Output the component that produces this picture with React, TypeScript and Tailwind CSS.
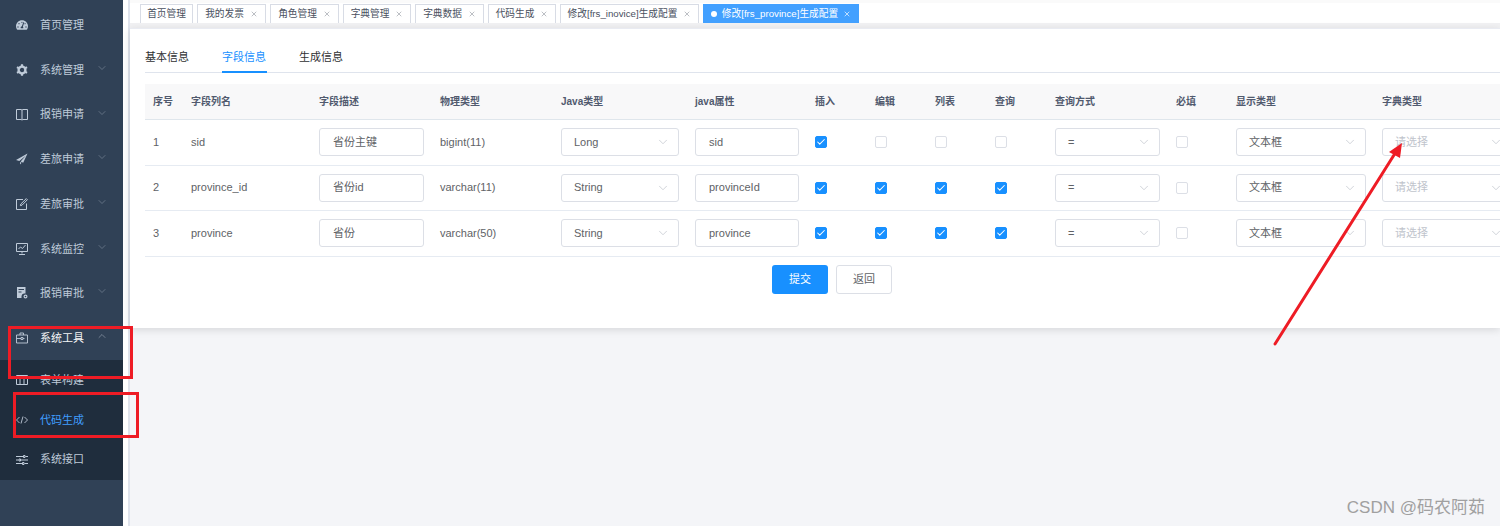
import type { ReactNode } from "react";
import { ChevronDown, ChevronUp, Check, X } from "lucide-react";
import { FaTachometerAlt } from "react-icons/fa";

const font = "font-['Liberation_Sans','Noto_Sans_CJK_SC',sans-serif]";

const GearIcon = () => (
  <svg viewBox="0 0 12 12" className="h-3 w-3" fill="none" stroke="currentColor">
    <circle cx="6" cy="6" r="3.4" strokeWidth="2.4" />
    <path d="M6 .2v2M6 9.8v2M1 3.1l1.7 1M9.3 7.9l1.7 1M1 8.9l1.7-1M9.3 4.1l1.7-1" strokeWidth="2.2" />
  </svg>
);

const BookIcon = () => (
  <svg viewBox="0 0 12 12" className="h-3 w-3" fill="none" stroke="currentColor" strokeWidth="1">
    <path d="M.5 .5h4.5l1 .5 1-.5h4.5v10H7l-1 .5-1-.5H.5zM6 1v9.5" />
  </svg>
);

const PlaneIcon = () => (
  <svg viewBox="0 0 12 12" className="h-3 w-3" fill="currentColor">
    <path d="M11.5.5 0 7l3.3 1L10 2.5 4.6 8.6l2.6 1.1zM4 9v2.5l1.6-1.7z" />
  </svg>
);

const EditIcon = () => (
  <svg viewBox="0 0 12 12" className="h-3 w-3" fill="none" stroke="currentColor" strokeWidth="1">
    <path d="M7 1.5H.5v10h10V5.5" />
    <path d="M10.3.6 11.4 1.7 6 7.2l-1.6.4.4-1.6z" />
  </svg>
);

const MonitorIcon = () => (
  <svg viewBox="0 0 12 12" className="h-3 w-3" fill="none" stroke="currentColor" strokeWidth="1">
    <path d="M.5.5h11v8H.5zM6 8.5v2M3 11.5h6M2.5 6l2-2 2 1.5 3-3.5" />
  </svg>
);

const ReportIcon = () => (
  <svg viewBox="0 0 12 12" className="h-3 w-3" fill="currentColor">
    <path d="M1 0h8.5v6.5H8a3 3 0 0 0-2.5 2.5v2H1zM2.5 2v1h5.5V2zm0 2.5v1h3v-1zM9.5 7.5a2 2 0 1 1 0 4 2 2 0 0 1 0-4zm0 1.2a.8.8 0 1 0 0 1.6.8.8 0 0 0 0-1.6z" />
  </svg>
);

const ToolIcon = () => (
  <svg viewBox="0 0 12 12" className="h-3 w-3" fill="none" stroke="currentColor" strokeWidth="0.9">
    <path d="M.5 3h11v8H.5zM4 3V1h3.5v2M.5 6.5H5M7 6.5h1.5M5 5.5h2v2H5z" />
  </svg>
);

const GridIcon = () => (
  <svg viewBox="0 0 12 12" className="h-3 w-3" fill="none" stroke="currentColor" strokeWidth="1">
    <path d="M.5 1.5h11v9H.5zM.5 4.5h11M4 4.5v6M8 4.5v6" />
  </svg>
);

const CodeIcon = () => (
  <svg viewBox="0 0 12 12" className="h-3 w-3" fill="none" stroke="currentColor" strokeWidth="0.9">
    <path d="M3.5 3 .5 6l3 3M8.5 3l3 3-3 3M7 2.5 5 9.5" />
  </svg>
);

const SlidersIcon = () => (
  <svg viewBox="0 0 12 12" className="h-3 w-3" fill="none" stroke="currentColor" strokeWidth="1">
    <path d="M0 2.5h7M9.5 2.5H12M0 6h2.5M5 6h7M0 9.5h6M8.5 9.5H12" />
    <path d="M7.5 1.5h1.5v2H7.5zM3 5h1.5v2H3zM6.5 8.5H8v2H6.5z" />
  </svg>
);

const menus: { icon: ReactNode; label: string; arrow?: "down" | "up"; active?: boolean }[] = [
  { icon: <FaTachometerAlt className="h-3 w-3" />, label: "首页管理" },
  { icon: <GearIcon />, label: "系统管理", arrow: "down" },
  { icon: <BookIcon />, label: "报销申请", arrow: "down" },
  { icon: <PlaneIcon />, label: "差旅申请", arrow: "down" },
  { icon: <EditIcon />, label: "差旅审批", arrow: "down" },
  { icon: <MonitorIcon />, label: "系统监控", arrow: "down" },
  { icon: <ReportIcon />, label: "报销审批", arrow: "down" },
  { icon: <ToolIcon />, label: "系统工具", arrow: "up", active: true },
];

const subMenus = [
  { icon: <GridIcon />, label: "表单构建" },
  { icon: <CodeIcon />, label: "代码生成", active: true },
  { icon: <SlidersIcon />, label: "系统接口" },
];

const tags = [
  { label: "首页管理", w: "w-[53px]" },
  { label: "我的发票", w: "w-[69px]", close: true },
  { label: "角色管理", w: "w-[69px]", close: true },
  { label: "字典管理", w: "w-[68px]", close: true },
  { label: "字典数据", w: "w-[69px]", close: true },
  { label: "代码生成", w: "w-[68px]", close: true },
  { label: "修改[frs_inovice]生成配置", w: "w-[139px]", close: true },
];

const rows = [
  { no: 1, h: "h-[46px]", name: "sid", desc: "省份主键", type: "bigint(11)", java: "Long", attr: "sid", checks: [true, false, false, false] },
  { no: 2, h: "h-[45px]", name: "province_id", desc: "省份id", type: "varchar(11)", java: "String", attr: "provinceId", checks: [true, true, true, true] },
  { no: 3, h: "h-[46px]", name: "province", desc: "省份", type: "varchar(50)", java: "String", attr: "province", checks: [true, true, true, true] },
];

const heads = [
  ["序号", "w-[38px]"],
  ["字段列名", "w-[128px]"],
  ["字段描述", "w-[121px]"],
  ["物理类型", "w-[121px]"],
  ["Java类型", "w-[134px]"],
  ["java属性", "w-[120px]"],
  ["插入", "w-[60px]"],
  ["编辑", "w-[60px]"],
  ["列表", "w-[60px]"],
  ["查询", "w-[60px]"],
  ["查询方式", "w-[121px]"],
  ["必填", "w-[60px]"],
  ["显示类型", "w-[146px]"],
  ["字典类型", "w-[146px]"],
];

const Box = ({ on }: { on: boolean }) => (
  <span
    className={`flex h-3 w-3 items-center justify-center rounded-[2px] border ${
      on ? "border-[#1890ff] bg-[#1890ff]" : "border-[#dcdfe6] bg-white"
    }`}
  >
    {on && <Check className="h-2.5 w-2.5 text-white" strokeWidth={2.5} />}
  </span>
);

const Field = ({ value, w }: { value: string; w: string }) => (
  <div className={`flex h-7 ${w} items-center rounded-[3px] border border-[#dcdfe6] bg-white pl-[13px] text-[11px] text-[#606266]`}>
    {value}
  </div>
);

const Picker = ({ value, w, empty }: { value: string; w: string; empty?: boolean }) => (
  <div className={`flex h-7 ${w} items-center justify-between rounded-[3px] border border-[#dcdfe6] bg-white pl-[12px] pr-[8px] text-[11px] ${empty ? "text-[#c0c4cc]" : "text-[#606266]"}`}>
    <span>{value}</span>
    <ChevronDown className="h-3.5 w-3.5 text-[#c0c4cc]" strokeWidth={1.25} />
  </div>
);

export default function App() {
  return (
    <div className={`relative flex h-[526px] w-[1500px] overflow-hidden bg-[#f4f5f8] ${font}`}>
      <aside className="h-full w-[123px] shrink-0 bg-[#304156] pt-[3px]">
        {menus.map((m) => (
          <div key={m.label} className="flex h-[44.7px] items-center pl-[16px]">
            <span className="w-6 text-[#bfcbd9]">{m.icon}</span>
            <span className={`w-[56px] text-[11px] ${m.active ? "text-[#f4f4f5]" : "text-[#bfcbd9]"}`}>{m.label}</span>
            {m.arrow === "down" && <ChevronDown className="-mt-1 h-3 w-3 text-[#7f8c9c]" strokeWidth={1.25} />}
            {m.arrow === "up" && <ChevronUp className="-mt-1 h-3 w-3 text-[#9aa5b3]" strokeWidth={1.25} />}
          </div>
        ))}
        <div className="-mt-px bg-[#1f2d3d] pt-px">
          {subMenus.map((m) => (
            <div key={m.label} className="flex h-[39.7px] items-center pl-[16px]">
              <span className="w-6 text-[#bfcbd9]">{m.icon}</span>
              <span className={`text-[11px] ${m.active ? "text-[#409eff]" : "text-[#bfcbd9]"}`}>{m.label}</span>
            </div>
          ))}
        </div>
      </aside>

      <div className="w-[5px] shrink-0 bg-white" />
      <div className="w-[2px] shrink-0 bg-[#dfe3ec]" />

      <main className="min-w-0 flex-1">
        <div className="flex h-[23px] gap-[4px] border-t-[3px] border-[#fafafa] bg-white pl-[10px] pt-[1px]">
          {tags.map((t) => (
            <div
              key={t.label}
              className={`flex h-[19px] ${t.w} items-center justify-center gap-[6px] border border-b-0 border-[#d8dce5] bg-white text-[9.7px] text-[#495060]`}
            >
              <span>{t.label}</span>
              {t.close && <X className="h-2 w-2 text-[#9a9ea6]" strokeWidth={2} />}
            </div>
          ))}
          <div className="flex h-[19px] w-[156px] items-center justify-center border border-b-0 border-[#42a0ff] bg-[#42a0ff] text-[9.7px] text-white">
            <span className="mr-[5px] h-[6px] w-[6px] rounded-full bg-white" />
            <span>修改[frs_province]生成配置</span>
            <X className="ml-[5px] h-2 w-2" strokeWidth={2} />
          </div>
        </div>
        <div className="h-[5px] bg-[#f1f1f3]" />

        <section className="h-[300px] overflow-hidden border-t border-[#e9ebf2] bg-white pl-[15px] shadow-[0_2px_8px_rgba(0,0,0,0.12)]">
          <div className="flex h-[44px] items-end border-b border-[#dfe4ed]">
            <div className="h-[27px] w-[77px] pt-[5px] text-[11px] leading-[15px] text-[#303133]">基本信息</div>
            <div className="-mb-px h-[28px] w-[45px] border-b-2 border-[#1890ff] pt-[5px] text-[11px] leading-[15px] text-[#1890ff]">字段信息</div>
            <div className="ml-[32px] h-[27px] pt-[5px] text-[11px] leading-[15px] text-[#303133]">生成信息</div>
          </div>

          <table className="mt-[11px] w-[1375px] table-fixed border-collapse text-left">
            <thead>
              <tr className="h-[35px] border-b border-[#dfe6ec] bg-[#f8f8f9]">
                {heads.map(([h, w]) => (
                  <th key={h} className={`${w} pl-2 text-[10px] font-bold text-[#515a6e]`}>{h}</th>
                ))}
              </tr>
            </thead>
            <tbody className="text-[11px] text-[#606266]">
              {rows.map((r) => (
                <tr key={r.no} className={`${r.h} border-b border-[#e6ebf2]`}>
                  <td className="pl-2">{r.no}</td>
                  <td className="pl-2">{r.name}</td>
                  <td className="pl-2"><Field value={r.desc} w="w-[105px]" /></td>
                  <td className="pl-2">{r.type}</td>
                  <td className="pl-2"><Picker value={r.java} w="w-[118px]" /></td>
                  <td className="pl-2"><Field value={r.attr} w="w-[104px]" /></td>
                  {r.checks.map((c, i) => (
                    <td key={i} className="pl-2"><Box on={c} /></td>
                  ))}
                  <td className="pl-2"><Picker value="=" w="w-[105px]" /></td>
                  <td className="pl-2"><Box on={false} /></td>
                  <td className="pl-2"><Picker value="文本框" w="w-[130px]" /></td>
                  <td className="pl-2"><Picker value="请选择" w="w-[130px]" empty /></td>
                </tr>
              ))}
            </tbody>
          </table>

          <div className="mt-[8px] flex justify-center gap-[8px] pl-[19px]">
            <button className="h-[29px] w-[56px] rounded-[3px] bg-[#1890ff] text-[11px] text-white">提交</button>
            <button className="h-[29px] w-[56px] rounded-[3px] border border-[#dcdfe6] bg-white text-[11px] text-[#606266]">返回</button>
          </div>
        </section>
      </main>

      {/* annotations drawn on top of the screenshot */}
      <div className="absolute left-[8px] top-[326px] h-[53px] w-[125px] border-[3px] border-[#ee1c25]" />
      <div className="absolute left-[13px] top-[392px] h-[46px] w-[126px] border-[3px] border-[#ee1c25]" />
      <svg className="absolute left-0 top-0 h-[526px] w-[1500px]" viewBox="0 0 1500 526" fill="none">
        <path d="M1275 344 1394 155" stroke="#ee1c25" strokeWidth="3" strokeLinecap="round" />
        <path d="M1402 143 1389 152 1400 158z" fill="#ee1c25" />
      </svg>
      <div className="absolute bottom-[8px] right-[15px] text-[17px] leading-5 text-[#a0a0a0]">CSDN @码农阿茹</div>
    </div>
  );
}
